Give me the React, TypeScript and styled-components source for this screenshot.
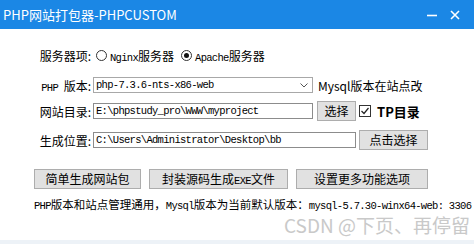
import React, { useState } from 'react';
import styled, { createGlobalStyle } from 'styled-components';

const GlobalStyle = createGlobalStyle`
  html, body {
    margin: 0;
    padding: 0;
    background: #ffffff;
  }
  body {
    font-family: "Noto Sans CJK SC", "Liberation Sans", sans-serif;
  }
`;

const Window = styled.div`
  width: 474px;
  height: 244px;
  background: #ffffff;
  display: flex;
  flex-direction: column;
  overflow: hidden;
`;

const TitleBar = styled.div`
  height: 29px;
  flex: none;
  background: #1b87e5;
  display: flex;
  align-items: center;
  padding: 0 0 0 3px;
  color: #ffffff;
`;

const Title = styled.div`
  flex: 1;
  font-size: 13px;
  line-height: 29px;
  white-space: nowrap;
`;

const WinControls = styled.div`
  display: flex;
  align-items: center;
  gap: 12px;
  padding-right: 14px;
`;

const Body = styled.div`
  flex: 1;
  display: flex;
  flex-direction: column;
  padding: 16px 0 0 34px;
  font-size: 12px;
  color: #000000;
`;

const Row = styled.div<{ $mt?: number }>`
  display: flex;
  align-items: center;
  height: 20px;
  margin-top: ${({ $mt }) => $mt ?? 0}px;
`;

const Label = styled.div`
  width: 57px;
  margin-right: 2px;
  text-align: right;
  white-space: nowrap;
  font-size: 12px;
`;

// SimSun-style half-width ascii: about 5.6px per char
const Mono = styled.span`
  font-family: "Liberation Mono", "DejaVu Sans Mono", monospace;
  font-size: 10.5px;
  letter-spacing: -0.7px;
`;

const RadioItem = styled.label`
  display: flex;
  align-items: center;
  gap: 3px;
  margin-left: 3px;
  margin-right: 4px;
  white-space: nowrap;
`;

const RadioCircle = styled.span<{ $checked: boolean }>`
  width: 11px;
  height: 11px;
  box-sizing: border-box;
  border: 1px solid #333333;
  border-radius: 50%;
  background: #ffffff;
  display: flex;
  align-items: center;
  justify-content: center;
  &::after {
    content: '';
    width: 5px;
    height: 5px;
    border-radius: 50%;
    background: ${({ $checked }) => ($checked ? '#111111' : 'transparent')};
  }
`;

const Field = styled.div<{ $w: number }>`
  width: ${({ $w }) => $w}px;
  height: 16px;
  box-sizing: border-box;
  border: 1px solid #8c8c8c;
  background: #ffffff;
  display: flex;
  align-items: center;
  padding-left: 2px;
  white-space: nowrap;
  overflow: hidden;
`;

const SelectBox = styled(Field)`
  border-color: #a8a8a8;
  justify-content: space-between;
  padding-right: 4px;
`;

const Note = styled.span`
  margin-left: 5px;
  font-size: 12px;
  white-space: nowrap;
`;

const Btn = styled.button<{ $w: number; $ml?: number }>`
  width: ${({ $w }) => $w}px;
  height: 20px;
  margin-left: ${({ $ml }) => $ml ?? 0}px;
  padding: 0;
  box-sizing: border-box;
  border: 1px solid #adadad;
  background: #e1e1e1;
  font-family: "Noto Sans CJK SC", sans-serif;
  font-size: 12px;
  color: #000000;
  line-height: 18px;
  white-space: nowrap;
  cursor: pointer;
`;

const CheckBox = styled.span`
  width: 12px;
  height: 12px;
  margin-left: 3px;
  box-sizing: border-box;
  border: 1px solid #333333;
  background: #ffffff;
  display: flex;
  align-items: center;
  justify-content: center;
`;

const BoldLabel = styled.span`
  margin-left: 6px;
  font-size: 13px;
  font-weight: 700;
  white-space: nowrap;
`;

const ButtonRow = styled.div`
  display: flex;
  align-items: center;
  gap: 8px;
  margin-top: 19px;
`;

const InfoLine = styled.div`
  margin-top: 8px;
  height: 14px;
  line-height: 14px;
  font-size: 11.5px;
  white-space: nowrap;
`;

const Watermark = styled.div`
  align-self: flex-end;
  margin: 3px 4px 0 0;
  font-size: 19px;
  line-height: 22px;
  color: #c9c9c9;
  white-space: nowrap;
`;

const BottomStrip = styled.div`
  height: 4px;
  flex: none;
  background: #edf2f7;
`;

export default function App() {
  const [server, setServer] = useState<'nginx' | 'apache'>('apache');

  return (
    <>
      <GlobalStyle />
      <Window>
        <TitleBar>
          <Title>PHP网站打包器-PHPCUSTOM</Title>
          <WinControls>
            <svg width="12" height="12" viewBox="0 0 12 12">
              <path d="M1 6.5h10" stroke="#fff" strokeWidth="1.6" />
            </svg>
            <svg width="10" height="10" viewBox="0 0 10 10">
              <path d="M1 1l8 8M9 1l-8 8" stroke="#fff" strokeWidth="1.6" />
            </svg>
          </WinControls>
        </TitleBar>
        <Body>
          <Row>
            <Label>服务器项:</Label>
            <RadioItem onClick={() => setServer('nginx')}>
              <RadioCircle $checked={server === 'nginx'} />
              <span><Mono>Nginx</Mono>服务器</span>
            </RadioItem>
            <RadioItem onClick={() => setServer('apache')}>
              <RadioCircle $checked={server === 'apache'} />
              <span><Mono>Apache</Mono>服务器</span>
            </RadioItem>
          </Row>
          <Row $mt={10}>
            <Label><Mono>PHP </Mono>版本:</Label>
            <SelectBox $w={220}>
              <Mono>php-7.3.6-nts-x86-web</Mono>
              <svg width="8" height="5" viewBox="0 0 8 5">
                <path d="M0.5 0.5L4 4L7.5 0.5" stroke="#555" strokeWidth="1" fill="none" />
              </svg>
            </SelectBox>
            <Note>Mysql版本在站点改</Note>
          </Row>
          <Row $mt={6}>
            <Label>网站目录:</Label>
            <Field $w={220}>
              <Mono>E:\phpstudy_pro\WWW\myproject</Mono>
            </Field>
            <Btn $w={39} $ml={4}>选择</Btn>
            <CheckBox>
              <svg width="10" height="10" viewBox="0 0 10 10">
                <path d="M1.5 5L4 7.5L8.5 2" stroke="#222" strokeWidth="1.2" fill="none" />
              </svg>
            </CheckBox>
            <BoldLabel>TP目录</BoldLabel>
          </Row>
          <Row $mt={9}>
            <Label>生成位置:</Label>
            <Field $w={263}>
              <Mono>C:\Users\Administrator\Desktop\bb</Mono>
            </Field>
            <Btn $w={69} $ml={3}>点击选择</Btn>
          </Row>
          <ButtonRow>
            <Btn $w={107}>简单生成网站包</Btn>
            <Btn $w={139}>封装源码生成<Mono>EXE</Mono>文件</Btn>
            <Btn $w={132}>设置更多功能选项</Btn>
          </ButtonRow>
          <InfoLine>
            <Mono>PHP</Mono>版本和站点管理通用，<Mono>Mysql</Mono>版本为当前默认版本：<Mono>mysql-5.7.30-winx64-web: 3306</Mono>
          </InfoLine>
          <Watermark>CSDN @下页、再停留</Watermark>
        </Body>
        <BottomStrip />
      </Window>
    </>
  );
}
